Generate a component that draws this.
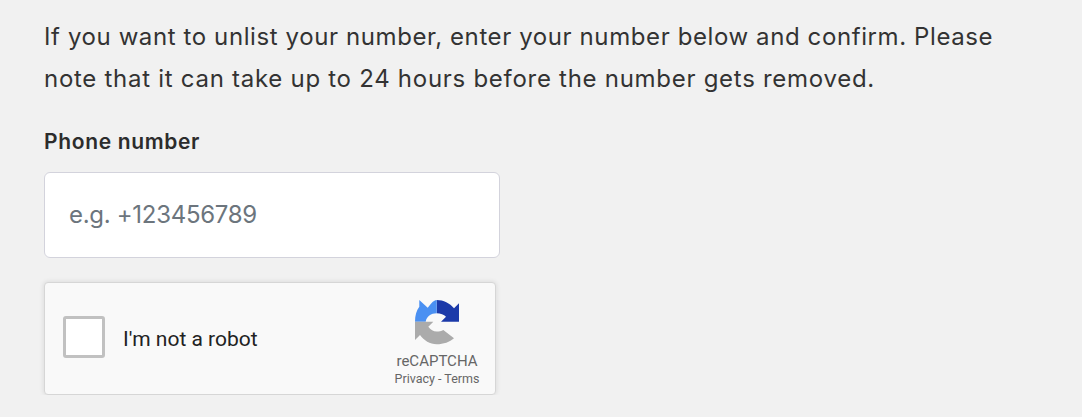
<script>
</script>

<div class="page">
  <p class="intro">If you want to unlist your number, enter your number below and confirm. Please<br /><span class="second">note that it can take up to 24 hours before the number gets removed.</span></p>
  <label class="label" for="phone">Phone number</label>
  <input id="phone" class="input" type="text" placeholder="e.g. +123456789" />
  <div class="captcha">
    <div class="check"></div>
    <span class="robot">I'm not a robot</span>
    <div class="brand">
      <svg class="logo" viewBox="0 0 54 54" width="54" height="54" aria-hidden="true">
        <path fill="#1c3aa9" d="M26.700 4C33.500 4 39.800 7.200 44 12.300L49 7.300V25.700H31L36 20.700C34 18.500 30.500 17.300 26.700 17.300z"/>
        <path fill="#4a90f2" d="M9.300 4L17.700 11.700C20 9.500 23 4 26.700 4V17.300C21 17.300 16.500 20.500 15.700 25.700H5C5 19.500 6.500 14.500 9.300 10.700z"/>
        <path fill="#ababab" d="M5 25.700H23.300L18.300 30.700C20.500 33.500 23.500 35.500 26.700 35.500C29 35.500 31.500 35 33.300 34L44 42.300C39.800 46 33.500 48.300 26.700 48.300C19.800 48.300 14 44.500 10 39L5 44z"/>
      </svg>
      <div class="name">reCAPTCHA</div>
      <div class="links">Privacy - Terms</div>
    </div>
  </div>
</div>

<style>
  :global(body) {
    margin: 0;
    background: #f1f1f1;
  }
  .page {
    display: flex;
    flex-direction: column;
    align-items: flex-start;
    padding: 16px 0 0 44px;
    font-family: "Inter", "Noto Sans", sans-serif;
    color: #333;
  }
  .intro {
    margin: 0;
    font-size: 24px;
    line-height: 42px;
    letter-spacing: 0.6px;
    white-space: nowrap;
  }
  .second {
    letter-spacing: 0.72px;
  }
  .label {
    margin-top: 27px;
    font-size: 21px;
    font-weight: 600;
    line-height: 30px;
    letter-spacing: 0.65px;
    color: #2c2c2c;
  }
  .input {
    box-sizing: border-box;
    width: 456px;
    height: 86px;
    margin-top: 15px;
    padding: 0 24px 2px;
    background: #fff;
    border: 1px solid #d3d3dc;
    border-radius: 6px;
    font: inherit;
    font-size: 24px;
    letter-spacing: -0.3px;
    outline: none;
  }
  .input::placeholder {
    color: #6c757d;
    opacity: 1;
  }
  .captcha {
    box-sizing: border-box;
    display: flex;
    align-items: center;
    width: 452px;
    height: 113px;
    margin-top: 24px;
    padding-left: 18px;
    background: #f9f9f9;
    border: 1px solid #d6d6d6;
    border-radius: 4px;
    box-shadow: 0 0 4px 1px rgba(0, 0, 0, 0.08);
    font-family: Roboto, sans-serif;
  }
  .check {
    box-sizing: border-box;
    width: 42px;
    height: 42px;
    margin-bottom: 4px;
    background: #fff;
    border: 3px solid #c1c1c1;
    border-radius: 3px;
  }
  .robot {
    margin-left: 18px;
    font-size: 21px;
    color: #222;
  }
  .brand {
    display: flex;
    flex-direction: column;
    align-items: center;
    align-self: flex-start;
    margin: 13px 13px 0 auto;
    width: 90px;
  }
  .logo {
    display: block;
  }
  .name {
    margin-top: 3px;
    font-size: 15px;
    line-height: 16px;
    color: #666;
  }
  .links {
    margin-top: 1px;
    font-size: 12.500px;
    line-height: 18px;
    color: #666;
  }
</style>
